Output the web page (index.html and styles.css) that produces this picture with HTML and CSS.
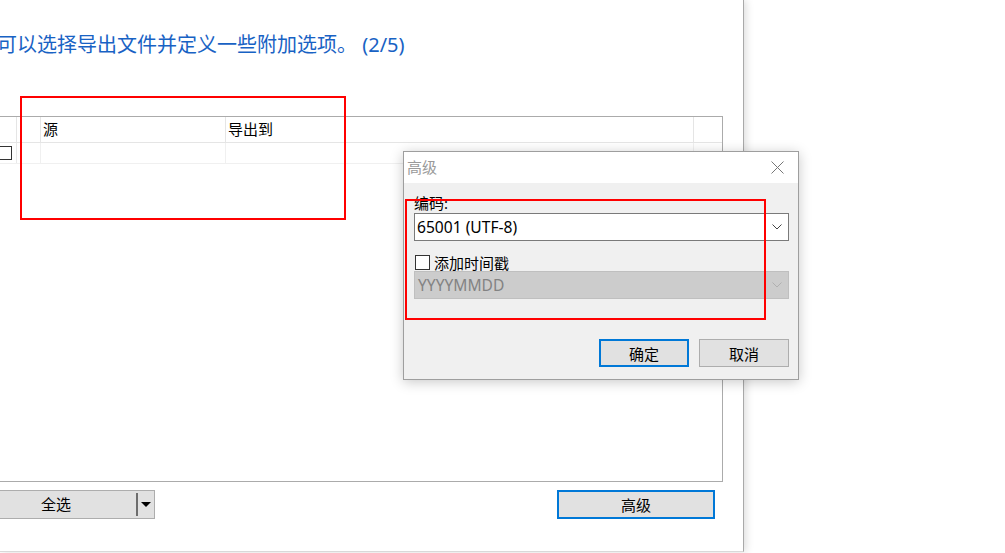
FILE: index.html
```html
<!DOCTYPE html>
<html lang="zh-CN">
<head>
    <meta charset="UTF-8">
    <meta name="viewport" content="width=device-width, initial-scale=1.0">
    <title>导出向导</title>
    <link rel="stylesheet" href="styles.css">
</head>
<body>
    <div class="wizard">
        <h1 class="wizard-title">可以选择导出文件并定义一些附加选项。 (2/5)</h1>

        <div class="file-list">
            <div class="list-row list-head">
                <div class="cell"></div>
                <div class="cell"></div>
                <div class="cell">源</div>
                <div class="cell">导出到</div>
                <div class="cell"></div>
            </div>
            <div class="list-row list-item">
                <div class="cell check-cell"><span class="check"></span></div>
                <div class="cell"></div>
                <div class="cell"></div>
                <div class="cell"></div>
            </div>
        </div>

        <div class="wizard-actions">
            <div class="split-button">
                <span class="split-main">全选</span>
                <span class="split-arrow"></span>
            </div>
            <button class="btn btn-default btn-advanced">高级</button>
        </div>
    </div>

    <div class="dialog">
        <div class="dialog-titlebar">
            <span class="dialog-title">高级</span>
            <svg class="dialog-close" width="13" height="13" viewBox="0 0 13 13">
                <path d="M0.5 0.5 L12.5 12.5 M12.5 0.5 L0.5 12.5" stroke="#777" stroke-width="1" fill="none"/>
            </svg>
        </div>
        <div class="dialog-body">
            <label class="field-label">编码:</label>
            <div class="combo">
                <span class="combo-value">65001 (UTF-8)</span>
                <svg width="10" height="6" viewBox="0 0 10 6">
                    <polyline points="0.5,0.5 5,5 9.5,0.5" stroke="#444" stroke-width="1" fill="none"/>
                </svg>
            </div>
            <div class="check-row">
                <span class="check check-large"></span>
                <span>添加时间戳</span>
            </div>
            <div class="combo combo-disabled">
                <span class="combo-value">YYYYMMDD</span>
                <svg width="10" height="6" viewBox="0 0 10 6">
                    <polyline points="0.5,0.5 5,5 9.5,0.5" stroke="#b0b0b0" stroke-width="1" fill="none"/>
                </svg>
            </div>
            <div class="dialog-actions">
                <button class="btn btn-default">确定</button>
                <button class="btn">取消</button>
            </div>
        </div>
    </div>

    <!-- highlight frames -->
    <div class="mark mark-list"></div>
    <div class="mark mark-dialog"></div>
</body>
</html>
```

FILE: styles.css
```css
body {
    margin: 0;
    padding: 0;
    width: 1005px;
    height: 553px;
    overflow: hidden;
    background: #fff;
    font-family: "Noto Sans", "Noto Sans CJK SC", sans-serif;
    font-size: 15px;
    color: #000;
}

.wizard {
    width: 744px;
    height: 552px;
    box-sizing: border-box;
    border-right: 1px solid #a9a9a9;
    border-bottom: 1px solid #d9d9d9;
    box-shadow: 2px 0 8px rgba(0, 0, 0, 0.14);
    background: #fff;
    overflow: hidden;
}

.wizard-title {
    margin: 0 0 0 -3px;
    padding-top: 31px;
    height: 28px;
    font-size: 20px;
    line-height: 28px;
    font-weight: normal;
    color: #1862c4;
    white-space: nowrap;
}

.file-list {
    margin: 57px 0 0 -30px;
    width: 753px;
    height: 366px;
    box-sizing: border-box;
    border: 1px solid #ababab;
    background: #fff;
}

.list-row {
    display: grid;
    grid-template-columns: 46px 24px 185px 468px 28px;
}

.list-head {
    height: 26px;
    border-bottom: 1px solid #e5e5e5;
    box-sizing: border-box;
}

.list-head .cell {
    border-right: 1px solid #e5e5e5;
    padding-left: 2px;
    line-height: 25px;
    font-size: 15px;
}

.list-head .cell:last-child {
    border-right: none;
}

.list-item {
    height: 21px;
    box-sizing: border-box;
    border-bottom: 1px solid #f0f0f0;
}

.list-item .cell {
    border-right: 1px solid #f0f0f0;
}

.list-item .cell:first-child {
    border-right-color: #e9e9e9;
}

.check-cell {
    display: flex;
    align-items: center;
    justify-content: flex-end;
    padding-right: 4px;
}

.check {
    display: inline-block;
    width: 14px;
    height: 14px;
    box-sizing: border-box;
    border: 1px solid #333;
    background: #fff;
}

.wizard-actions {
    display: flex;
    align-items: center;
    margin-top: 8px;
    margin-right: 28px;
}

.split-button {
    display: flex;
    margin-left: -25px;
    width: 180px;
    height: 29px;
    box-sizing: border-box;
    border: 1px solid #adadad;
    background: #e1e1e1;
}

.split-main {
    flex: 1;
    text-align: center;
    border-right: 2px solid #6d6d6d;
    margin: 2px 0;
    line-height: 23px;
}

.split-arrow {
    width: 16px;
    display: flex;
    align-items: center;
    justify-content: center;
}

.split-arrow::after {
    content: "";
    border-left: 5px solid transparent;
    border-right: 5px solid transparent;
    border-top: 5px solid #000;
}

.btn {
    height: 28px;
    width: 90px;
    box-sizing: border-box;
    border: 1px solid #adadad;
    background: #e1e1e1;
    font-family: "Noto Sans", "Noto Sans CJK SC", sans-serif;
    font-size: 15px;
    color: #000;
    padding: 0;
}

.btn-default {
    border: 2px solid #0078d7;
}

.btn-advanced {
    margin-left: auto;
    width: 158px;
    height: 29px;
}

/* advanced options window */
.dialog {
    position: absolute;
    left: 403px;
    top: 151px;
    width: 396px;
    box-sizing: border-box;
    border: 1px solid #9e9e9e;
    background: #f0f0f0;
    box-shadow: 0 2px 12px rgba(0, 0, 0, 0.22);
}

.dialog-titlebar {
    height: 31px;
    background: #fff;
    display: flex;
    align-items: center;
    justify-content: space-between;
    padding: 0 14px 2px 3px;
    box-sizing: border-box;
}

.dialog-title {
    color: #9a9a9a;
    font-size: 15px;
}

.dialog-close {
    margin-top: 2px;
}

.dialog-body {
    padding: 11px 9px 12px 10px;
}

.field-label {
    display: block;
    line-height: 19px;
}

.combo {
    height: 28px;
    box-sizing: border-box;
    border: 1px solid #7a7a7a;
    background: #fff;
    display: flex;
    align-items: center;
    justify-content: space-between;
    padding: 0 6px 0 2px;
}

.combo-value {
    font-size: 15.6px;
}

.combo-disabled {
    background: #cccccc;
    border-color: #bfbfbf;
    color: #838383;
    padding-left: 3px;
}

.check-row {
    display: flex;
    align-items: center;
    gap: 4px;
    height: 18px;
    margin-top: 12px;
    padding-left: 1px;
}

.check-large {
    width: 15px;
    height: 15px;
}

.dialog-actions {
    display: flex;
    justify-content: flex-end;
    gap: 10px;
    margin-top: 40px;
}

.mark {
    position: absolute;
    box-sizing: border-box;
    border: 2px solid #ff0000;
}

.mark-list {
    left: 20px;
    top: 96px;
    width: 326px;
    height: 124px;
}

.mark-dialog {
    left: 405px;
    top: 199px;
    width: 361px;
    height: 121px;
}
```
